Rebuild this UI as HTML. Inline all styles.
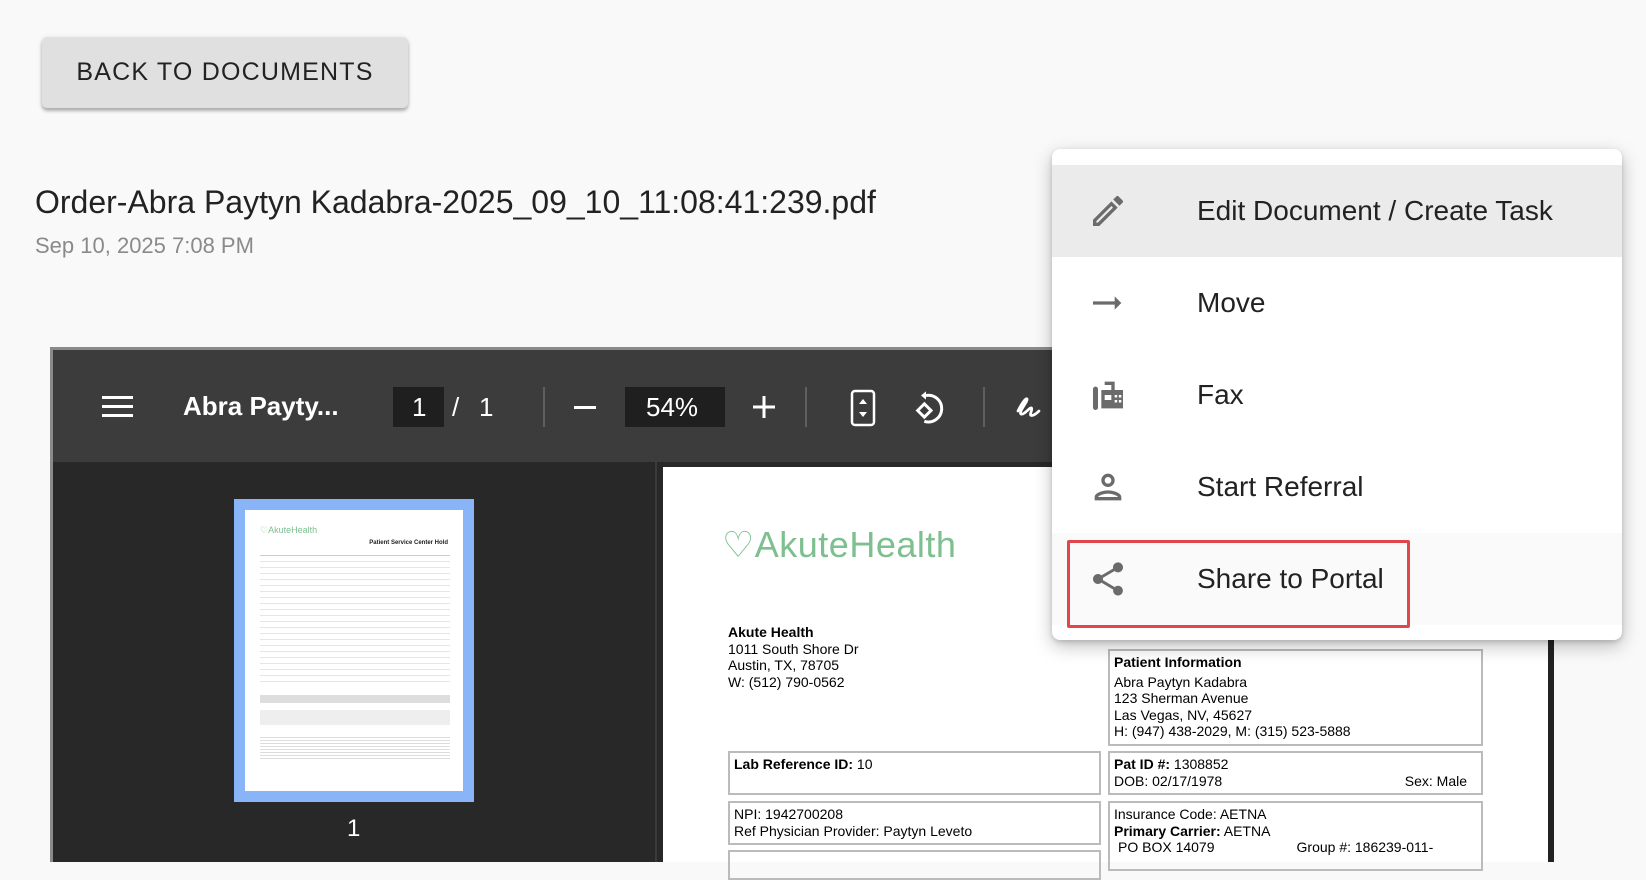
<!DOCTYPE html>
<html><head><meta charset="utf-8"><style>
*{margin:0;padding:0;box-sizing:border-box}
body{width:1646px;height:862px;overflow:hidden;background:#f9f9f9;font-family:"Liberation Sans",Roboto,sans-serif;position:relative;color:#212121}
.abs{position:absolute}
.btn{left:42px;top:37px;width:366px;height:71px;background:#e0e0e0;border-radius:5px;box-shadow:0 3px 3px rgba(0,0,0,.25),0 1px 6px rgba(0,0,0,.12);font-size:25px;letter-spacing:1.2px;color:#222;display:flex;align-items:center;justify-content:center;font-weight:500}
.tb{color:#fff;font-size:26px}
.sep{width:2px;height:40px;background:#5f5f5f;top:387px}
.menu{left:1052px;top:149px;width:570px;height:491px;background:#fff;border-radius:8px;box-shadow:0 6px 18px rgba(0,0,0,.25),0 2px 5px rgba(0,0,0,.15);overflow:hidden}
.item{position:absolute;left:0;width:570px;height:92px;font-size:28px;color:#222}
.item span{position:absolute;left:145px;top:50%;transform:translateY(-50%)}
.item svg{position:absolute;left:36px;top:26px;width:40px;height:40px;fill:#6b6b6b}
.doc{font-size:14px;color:#000;line-height:16.5px}
.box{border:2px solid #bbb;padding:3px 4px;font-size:14px;line-height:16.5px;color:#000}
</style></head><body>
<div class="abs btn">BACK TO DOCUMENTS</div>
<div class="abs" style="left:35px;top:184px;font-size:32px;color:#222">Order-Abra Paytyn Kadabra-2025_09_10_11:08:41:239.pdf</div>
<div class="abs" style="left:35px;top:233px;font-size:22px;color:#8a8a8a">Sep 10, 2025 7:08 PM</div>

<div class="abs" style="left:50px;top:347px;width:1504px;height:515px;background:#8a8a8a"></div>
<div class="abs" style="left:53px;top:350px;width:1501px;height:112px;background:#3c3c3c"></div>
<div class="abs" style="left:53px;top:462px;width:1501px;height:400px;background:#282828"></div>
<div class="abs" style="left:655px;top:462px;width:2px;height:400px;background:#3a3a3a"></div>
<svg class="abs" style="left:102px;top:394px" width="31" height="26"><rect y="2" width="31" height="3" fill="#fff"/><rect y="11" width="31" height="3" fill="#fff"/><rect y="20" width="31" height="3" fill="#fff"/></svg>
<div class="abs tb" style="left:183px;top:391px;font-weight:bold">Abra Payty...</div>
<div class="abs" style="left:393px;top:387px;width:51px;height:40px;background:#1f1f1f"></div>
<div class="abs tb" style="left:412px;top:392px">1</div>
<div class="abs tb" style="left:452px;top:392px">/</div>
<div class="abs tb" style="left:479px;top:392px">1</div>
<div class="abs sep" style="left:543px"></div>
<div class="abs" style="left:574px;top:406px;width:22px;height:3px;background:#fff"></div>
<div class="abs" style="left:625px;top:387px;width:100px;height:40px;background:#1f1f1f"></div>
<div class="abs tb" style="left:646px;top:392px">54%</div>
<svg class="abs" style="left:753px;top:396px" width="22" height="22"><rect x="9.5" width="3" height="22" fill="#fff"/><rect y="9.5" width="22" height="3" fill="#fff"/></svg>
<div class="abs sep" style="left:805px"></div>
<svg class="abs" style="left:850px;top:389px" width="26" height="38" viewBox="0 0 26 38"><rect x="2" y="2" width="22" height="34" rx="3" fill="none" stroke="#fff" stroke-width="2.5"/><path d="M13 10l-4 5h8zM13 28l-4-5h8z" fill="#fff"/></svg>
<svg class="abs" style="left:906px;top:388px" width="40" height="40" viewBox="0 0 24 24" fill="none" stroke="#fff" stroke-width="1.8"><path d="M7 13.5l4-4 4 4-4 4z"/><path d="M12 4.5a8 8 0 1 1-1 15.5"/><path d="M12 2v5l-3-2.5z" fill="#fff" stroke="none"/></svg>
<div class="abs sep" style="left:983px"></div>
<svg class="abs" style="left:1012px;top:390px" width="36" height="36" viewBox="0 0 24 24" fill="none" stroke="#fff" stroke-width="1.8" stroke-linecap="round"><path d="M4 14c2-4 5-9 6-8s-6 9-4 10 6-5 7-4-2 5 0 5 4-2 5-3"/></svg>

<div class="abs" style="left:234px;top:499px;width:240px;height:303px;background:#8ab4f8"></div>
<div class="abs" style="left:245px;top:510px;width:218px;height:281px;background:#fff">
<div style="position:absolute;left:15px;top:15px;font-size:9px;color:#7dbf8f">♡AkuteHealth</div>
<div style="position:absolute;right:15px;top:30px;font-size:6px;font-weight:bold">Patient Service Center Hold</div>
<div style="position:absolute;left:15px;top:45px;width:190px;height:130px;border-top:1px solid #ccc;background:repeating-linear-gradient(#fff 0 5px,#e6e6e6 5px 6px)"></div>
<div style="position:absolute;left:15px;top:185px;width:190px;height:8px;background:#ddd"></div>
<div style="position:absolute;left:15px;top:200px;width:190px;height:15px;background:#eee"></div>
<div style="position:absolute;left:15px;top:225px;width:190px;height:25px;background:repeating-linear-gradient(#fff 0 2px,#ddd 2px 3px)"></div>
</div>
<div class="abs" style="left:347px;top:815px;font-size:24px;color:#fff">1</div>

<div class="abs" style="left:663px;top:467px;width:891px;height:395px;background:#fff;border-right:6px solid #222"></div>
<div class="abs" style="left:722px;top:524px;font-size:36px;color:#7dbf8f;letter-spacing:0.5px">♡AkuteHealth</div>
<div class="abs doc" style="left:728px;top:624px"><b>Akute Health</b><br>1011 South Shore Dr<br>Austin, TX, 78705<br>W: (512) 790-0562</div>
<div class="abs box" style="left:1108px;top:649px;width:375px;height:97px"><b>Patient Information</b><br><div style="margin-top:3px">Abra Paytyn Kadabra<br>123 Sherman Avenue<br>Las Vegas, NV, 45627<br>H: (947) 438-2029, M: (315) 523-5888</div></div>
<div class="abs box" style="left:728px;top:751px;width:373px;height:44px"><b>Lab Reference ID:</b> 10</div>
<div class="abs box" style="left:1108px;top:751px;width:375px;height:44px"><b>Pat ID #:</b> 1308852<br>DOB: 02/17/1978<span style="float:right;margin-right:10px">Sex: Male</span></div>
<div class="abs box" style="left:728px;top:801px;width:373px;height:44px">NPI: 1942700208<br>Ref Physician Provider: Paytyn Leveto</div>
<div class="abs box" style="left:1108px;top:801px;width:375px;height:70px">Insurance Code: AETNA<br><b>Primary Carrier:</b> AETNA<br><span style="margin-left:4px">PO BOX 14079</span><span style="margin-left:82px">Group #: 186239-011-</span></div>
<div class="abs box" style="left:728px;top:850px;width:373px;height:30px"></div>

<div class="abs menu">
<div class="item" style="top:16px;background:#ebebeb"><svg viewBox="0 0 24 24"><path d="M3 17.25V21h3.75L17.81 9.94l-3.75-3.75L3 17.25zM5.920 19H5v-.92l9.06-9.06.92.92L5.92 19zM20.71 5.63l-2.34-2.34a1 1 0 0 0-1.41 0l-1.83 1.83 3.75 3.75 1.830-1.83a1 1 0 0 0 0-1.41z"/></svg><span>Edit Document / Create Task</span></div>
<div class="item" style="top:108px"><svg viewBox="0 0 24 24"><path d="M16.01 11H3v2h13.01v3L20 12l-3.99-4z"/></svg><span>Move</span></div>
<div class="item" style="top:200px"><svg viewBox="0 0 24 24"><path d="M3 8.5c0-.8.6-1.5 1.5-1.5S6 7.7 6 8.5v11c0 .8-.7 1.5-1.5 1.5S3 20.3 3 19.5zM8 9h2V4h6v5h5v11H8zm2 0h4V6h-4zm0 3v3h4v-3zm6 0v1.5h1.5V12zm2.5 0v1.5H20V12zM16 15v1.5h1.5V15zm2.5 0v1.5H20V15z" fill-rule="evenodd"/></svg><span>Fax</span></div>
<div class="item" style="top:292px"><svg viewBox="0 0 24 24"><path d="M12 6a2 2 0 1 1 0 4 2 2 0 0 1 0-4m0-2a4 4 0 1 0 0 8 4 4 0 0 0 0-8zm0 10c-2.7 0-8 1.3-8 4v2h16v-2c0-2.7-5.3-4-8-4zm-6 4c.2-.7 3.3-2 6-2s5.8 1.3 6 2z"/></svg><span>Start Referral</span></div>
<div class="item" style="top:384px;background:#fafafa"><svg viewBox="0 0 24 24"><path d="M18 16.08c-.76 0-1.44.3-1.96.77L8.91 12.7c.05-.23.09-.46.09-.7s-.04-.47-.09-.7l7.05-4.11c.54.5 1.25.81 2.04.81 1.66 0 3-1.34 3-3s-1.34-3-3-3-3 1.34-3 3c0 .24.04.47.09.7L8.04 9.81C7.5 9.31 6.79 9 6 9c-1.66 0-3 1.34-3 3s1.34 3 3 3c.79 0 1.5-.31 2.04-.81l7.12 4.160c-.05.21-.08.43-.08.65 0 1.61 1.31 2.92 2.92 2.92s2.92-1.31 2.92-2.92-1.31-2.92-2.92-2.92z"/></svg><span>Share to Portal</span></div>
</div>
<div class="abs" style="left:1067px;top:540px;width:343px;height:88px;border:3.5px solid #e0474c;border-radius:2px"></div>
</body></html>
